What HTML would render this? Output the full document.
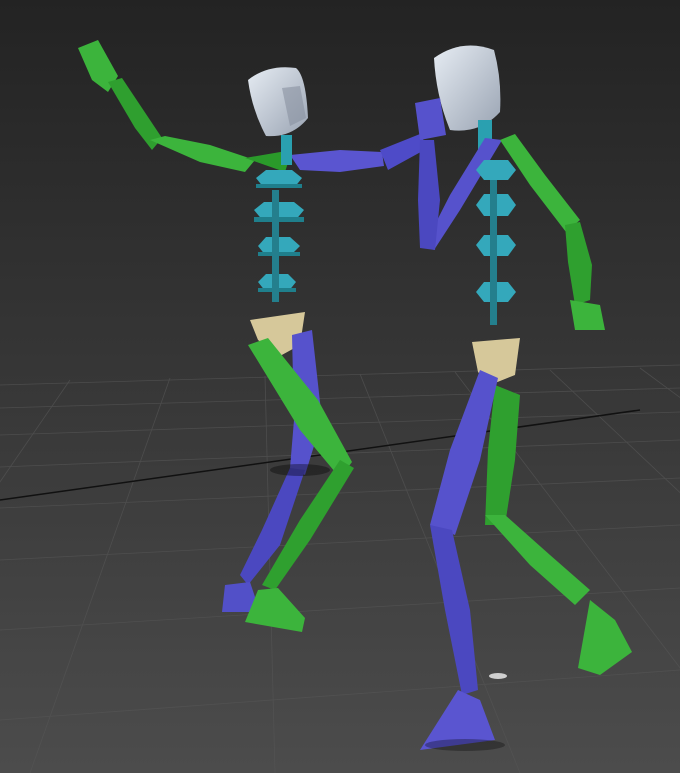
<!DOCTYPE html>
<html><head><meta charset="utf-8"><style>
html,body{margin:0;padding:0;background:#333}
svg{display:block}
</style></head><body>
<svg width="680" height="773" viewBox="0 0 680 773" xmlns="http://www.w3.org/2000/svg">
<defs>
<linearGradient id="bg" x1="0" y1="0" x2="0" y2="1">
<stop offset="0" stop-color="#232323"/><stop offset="0.45" stop-color="#353535"/><stop offset="1" stop-color="#4c4c4c"/>
</linearGradient>
<linearGradient id="head" x1="0" y1="0" x2="1" y2="1"><stop offset="0" stop-color="#e6ecf3"/><stop offset="1" stop-color="#9aa4b3"/></linearGradient>
</defs>
<rect width="680" height="773" fill="url(#bg)"/>
<g stroke="#555" stroke-width="0.8" fill="none" opacity="0.7">
<path d="M0 385 L680 365"/><path d="M0 408 L680 388"/><path d="M0 435 L680 412"/><path d="M0 467 L680 440"/>
<path d="M0 508 L680 478"/><path d="M0 560 L680 525"/><path d="M0 630 L680 588"/><path d="M0 720 L680 670"/>
<path d="M70 380 L-200 773"/><path d="M170 378 L30 773"/><path d="M265 376 L275 773"/><path d="M360 374 L520 773"/><path d="M455 372 L760 773"/><path d="M550 370 L900 700"/><path d="M640 368 L900 560"/>
</g>
<path d="M0 500 L640 410" stroke="#111" stroke-width="1.5"/>
<!-- left figure -->
<g>
<polygon points="78,48 98,40 118,76 108,92 92,80" fill="#3cb43c"/>
<polygon points="108,82 122,78 162,138 152,150 135,128" fill="#2f9f2f"/>
<polygon points="150,140 165,136 210,145 255,160 245,172 200,162" fill="#3cb43c"/>
<polygon points="245,158 292,150 285,172" fill="#2a9a2a"/>
<polygon points="290,155 340,150 382,152 384,166 340,172 300,170" fill="#5a55d0"/>
<polygon points="380,150 420,134 428,148 388,170" fill="#4e4bc8"/>
<path d="M248 80 Q268 64 296 68 Q306 76 308 118 Q292 138 266 136 Q252 110 248 80 Z" fill="url(#head)"/>
<path d="M282 88 L300 86 L306 118 L290 126 Z" fill="#8891a0" opacity="0.6"/>
<rect x="281" y="135" width="11" height="30" fill="#2aa0b0"/>
<g fill="#34a8bb">
<polygon points="256,178 266,170 292,170 302,178 294,188 264,188"/>
<polygon points="254,210 264,202 294,202 304,210 294,222 264,222"/>
<polygon points="258,246 266,237 290,237 300,246 290,256 266,256"/>
<polygon points="258,282 266,274 288,274 296,282 288,292 266,292"/>
</g>
<g fill="#1f7f8c"><rect x="256" y="184" width="46" height="4"/><rect x="254" y="217" width="50" height="5"/><rect x="258" y="252" width="42" height="4"/><rect x="258" y="288" width="38" height="4"/></g>
<rect x="272" y="190" width="7" height="112" fill="#247f8d"/>
<polygon points="250,320 305,312 300,345 280,356 258,340" fill="#d6c89a"/>
<polygon points="292,335 312,330 322,420 305,475 290,468 294,420" fill="#5652cc"/>
<polygon points="290,468 305,470 280,545 248,585 240,575 262,530" fill="#4b48c0"/>
<polygon points="225,585 250,582 260,612 222,612" fill="#5250c8"/>
<polygon points="248,345 268,338 318,400 352,462 340,478 300,430" fill="#3cb43c"/>
<polygon points="340,460 354,468 310,540 275,590 262,585 300,520" fill="#2fa02f"/>
<polygon points="258,590 278,588 305,618 302,632 245,622" fill="#3cb43c"/>
<ellipse cx="300" cy="470" rx="30" ry="6" fill="#000" opacity="0.35"/>
</g>
<!-- right figure -->
<g>
<path d="M434 58 Q462 38 494 50 Q502 80 500 112 Q480 134 450 130 Q436 96 434 58 Z" fill="url(#head)"/>
<polygon points="415,103 440,98 446,135 420,140" fill="#5652cc"/>
<rect x="478" y="120" width="14" height="30" fill="#2aa0b0"/>
<polygon points="485,138 502,140 460,210 434,250 425,244 450,195" fill="#5652cc"/>
<polygon points="420,140 434,140 440,200 435,250 420,248 418,200" fill="#4b48c0"/>
<polygon points="500,140 515,134 545,175 580,220 566,232 530,185" fill="#3cb43c"/>
<polygon points="565,225 580,222 592,265 590,300 575,305 568,262" fill="#2fa02f"/>
<polygon points="570,300 600,305 605,330 575,330" fill="#3cb43c"/>
<g fill="#34a8bb">
<polygon points="476,170 484,160 508,160 516,170 508,180 484,180"/>
<polygon points="476,205 484,194 508,194 516,205 508,216 484,216"/>
<polygon points="476,245 484,235 508,235 516,245 508,256 484,256"/>
<polygon points="476,292 484,282 508,282 516,292 508,302 484,302"/>
</g>
<rect x="490" y="180" width="7" height="145" fill="#247f8d"/>
<polygon points="472,342 520,338 515,375 490,385 478,372" fill="#d6c89a"/>
<polygon points="495,385 520,395 515,460 505,525 485,525 488,450" fill="#2fa02f"/>
<polygon points="485,515 505,515 550,555 590,590 575,605 530,565" fill="#3cb43c"/>
<polygon points="590,600 615,620 632,652 600,675 578,668" fill="#3cb43c"/>
<polygon points="480,370 498,378 480,460 455,535 430,525 450,450" fill="#5652cc"/>
<polygon points="430,525 452,530 470,610 478,690 462,695 445,610" fill="#4b48c0"/>
<polygon points="458,690 480,700 495,740 420,750" fill="#5a55d0"/>
<ellipse cx="498" cy="676" rx="9" ry="3" fill="#cfcfcf"/>
<ellipse cx="465" cy="745" rx="40" ry="6" fill="#000" opacity="0.3"/>
</g>
</svg>
</body></html>
